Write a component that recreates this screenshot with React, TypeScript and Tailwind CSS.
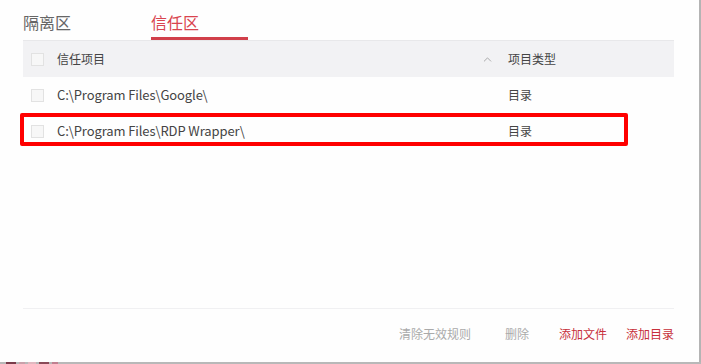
import { ChevronUp } from 'lucide-react';

const rows = [
  { path: 'C:\\Program Files\\Google\\', type: '目录' },
  { path: 'C:\\Program Files\\RDP Wrapper\\', type: '目录' },
];

function Box() {
  return <div className="w-[13px] h-[13px] border border-[#e2e2e2] bg-[#f7f7f7] shrink-0" />;
}

export default function App() {
  return (
    <div
      className="relative w-[701px] h-[364px] bg-[#fefefe] overflow-hidden text-[12px] text-[#444]"
      style={{ fontFamily: '"Microsoft YaHei", "Noto Sans CJK SC", sans-serif' }}
    >
      <div className="flex flex-col h-[362px] w-[699px]">
        {/* 标签页 */}
        <div className="flex pl-[23px] h-[40px]">
          <div className="w-[128px] pt-[11px] text-[16px] text-[#666] leading-[22px]">隔离区</div>
          <div className="flex flex-col w-[97px]">
            <div className="pt-[11px] text-[16px] text-[#d9444f] leading-[22px]">信任区</div>
            <div className="mt-auto h-[3px] bg-[#d13f4a]" />
          </div>
        </div>

        {/* 表头 */}
        <div className="ml-[23px] w-[651px] h-[37px] bg-[#f2f2f4] border-t border-[#e8e8ea] flex items-center pl-[8px]">
          <Box />
          <div className="ml-[13px] flex-1">信任项目</div>
          <ChevronUp className="w-[13px] h-[13px] text-[#999] mr-[14px]" strokeWidth={1.5} />
          <div className="w-[166px]">项目类型</div>
        </div>

        {/* 列表 */}
        {rows.map((r) => (
          <div key={r.path} className="ml-[23px] w-[651px] h-[36px] flex items-center pl-[8px]">
            <Box />
            <div className="ml-[13px] flex-1 text-[13px] tracking-[-0.1px]">{r.path}</div>
            <div className="w-[166px]">{r.type}</div>
          </div>
        ))}

        <div className="flex-1" />

        {/* 底部操作 */}
        <div className="ml-[23px] w-[651px] border-t border-[#f0f0f2] h-[54px] flex items-center justify-end pb-[4px]">
          <span className="text-[#aaa]">清除无效规则</span>
          <span className="text-[#aaa] ml-[34px]">删除</span>
          <span className="text-[#c7303b] ml-[30px]">添加文件</span>
          <span className="text-[#c7303b] ml-[19px]">添加目录</span>
        </div>
      </div>

      {/* 右侧边框 */}
      <div className="absolute right-0 top-0 w-[2px] h-full bg-[#b4b4b4]" />
      {/* 底部任务栏 */}
      <div className="absolute left-0 bottom-0 w-full h-[2px] bg-[#b8b8b8] flex gap-[3px] pl-[6px]">
        <div className="w-[10px] h-full bg-[#7a3b4a]" />
        <div className="w-[6px] h-full bg-[#c9a0aa]" />
        <div className="w-[8px] h-full bg-[#e1b8c0]" />
        <div className="w-[10px] h-full bg-[#8a4a58]" />
        <div className="w-[6px] h-full bg-[#c08090]" />
      </div>

      {/* 标注框 */}
      <div className="absolute left-[20px] top-[113px] w-[608px] h-[33px] border-[4px] border-[#ff0000] rounded-[2px]" />
    </div>
  );
}
